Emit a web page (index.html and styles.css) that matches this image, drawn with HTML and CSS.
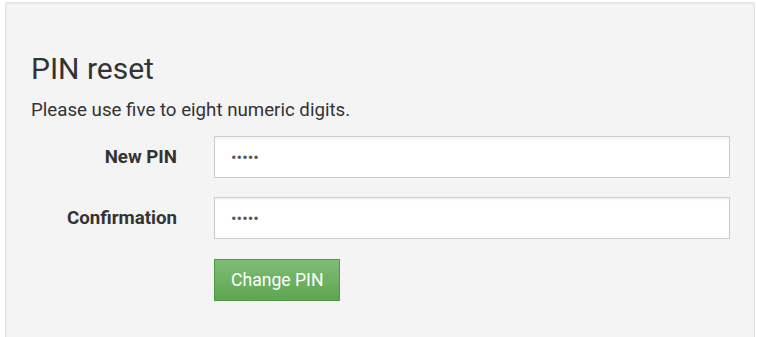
FILE: index.html
```html
<!DOCTYPE html>
<html>
<head>
<meta charset="utf-8">
<link rel="stylesheet" href="styles.css">
</head>
<body>
<div class="panel">
  <h2 class="title">PIN reset</h2>
  <p class="hint">Please use five to eight numeric digits.</p>
  <form class="form">
    <label class="label" for="pin">New PIN</label>
    <input class="field" id="pin" type="password" value="12345">
    <label class="label" for="conf">Confirmation</label>
    <input class="field" id="conf" type="password" value="12345">
    <div class="spacer"></div>
    <div class="actions"><button type="button" class="btn">Change PIN</button></div>
  </form>
</div>
</body>
</html>
```
FILE: styles.css
```css
html, body {
  margin: 0;
  padding: 0;
  background: #fff;
}
body {
  font-family: Roboto, "Liberation Sans", sans-serif;
  color: #333;
  overflow: hidden;
  height: 337px;
}
.panel {
  margin: 2px 2px 0 5px;
  height: 335px;
  box-sizing: border-box;
  background: #f4f4f4;
  border: 1px solid #e3e3e3;
  border-bottom: none;
  border-radius: 2px 2px 0 0;
  box-shadow: inset 0 1px 2px rgba(0,0,0,0.06);
  padding: 49px 24px 0 25px;
}
.title {
  margin: 0;
  font-size: 30px;
  font-weight: 400;
  line-height: 33px;
}
.hint {
  margin: 13px 0 0 0;
  font-size: 18.7px;
  line-height: 24px;
}
.form {
  margin-top: 14px;
  display: grid;
  grid-template-columns: 146px 1fr;
  column-gap: 37px;
  row-gap: 19px;
  align-items: center;
}
.label {
  text-align: right;
  font-weight: 700;
  font-size: 18.7px;
}
.field {
  box-sizing: border-box;
  height: 42px;
  margin: 0;
  padding: 0 16px;
  background: #fff;
  border: 1px solid #ccc;
  border-radius: 0;
  box-shadow: inset 0 2px 2px rgba(0,0,0,0.05);
  font-family: Roboto, "Liberation Sans", sans-serif;
  font-size: 16.5px;
  color: #555;
  outline: none;
}
.actions {
  margin-top: 1px;
}
.btn {
  box-sizing: border-box;
  height: 42px;
  padding: 0 16px;
  font-family: Roboto, "Liberation Sans", sans-serif;
  font-size: 17.6px;
  color: #fff;
  background: linear-gradient(#7ebe74, #5ea552);
  border: 1px solid #4f9945;
  border-radius: 0;
  cursor: pointer;
}
```
